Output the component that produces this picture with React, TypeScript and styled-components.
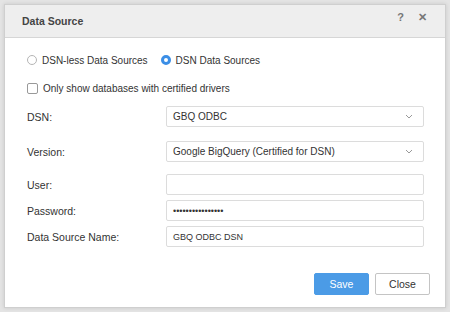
import { FC } from 'react';
import styled, { createGlobalStyle } from 'styled-components';

const GlobalStyle = createGlobalStyle`
	html, body {
		margin: 0;
		padding: 0;
		background: #e4e4e4;
		font-family: 'Liberation Sans', Arial, sans-serif;
	}
	#root {
		padding: 4px;
		width: 450px;
		height: 312px;
		box-sizing: border-box;
	}
`;

const Dialog = styled.div`
	width: 442px;
	height: 304px;
	box-sizing: border-box;
	background: #fff;
	border: 1px solid #cfcfcf;
	box-shadow: 0 0 4px rgba(0, 0, 0, 0.12);
	display: flex;
	flex-direction: column;
`;

const Header = styled.div`
	height: 32px;
	flex-shrink: 0;
	display: flex;
	align-items: center;
	padding: 0 18px 0 17px;
	background: #eeeeee;
	border-bottom: 1px solid #d6d6d6;
`;

const Title = styled.div`
	flex: 1;
	font-size: 10.5px;
	font-weight: bold;
	color: #444;
`;

const HeaderButton = styled.span`
	font-size: 11px;
	font-weight: bold;
	color: #777;
	margin-left: 14px;
	margin-top: -8px;
	cursor: pointer;
`;

const Body = styled.div`
	flex: 1;
	padding: 15px 21px 0 22px;
	display: flex;
	flex-direction: column;
	font-size: 10px;
	color: #333;
`;

const RadioRow = styled.div`
	display: flex;
	align-items: center;
	height: 14px;
`;

const Option = styled.label`
	display: flex;
	align-items: center;
	margin-right: 13px;
	color: #333;
`;

const RadioDot = styled.span<{ $checked?: boolean }>`
	width: 10px;
	height: 10px;
	box-sizing: border-box;
	border-radius: 50%;
	margin-right: 5px;
	border: ${(p) => (p.$checked ? '3px solid #3b8ee6' : '1px solid #b5b5b5')};
	background: #fff;
`;

const CheckRow = styled.label`
	display: flex;
	align-items: center;
	height: 14px;
	margin-top: 14px;
`;

const CheckBox = styled.span`
	width: 9px;
	height: 9px;
	border: 1px solid #999;
	border-radius: 2px;
	margin-right: 5px;
	background: #fff;
`;

const FieldRow = styled.div<{ $gap: number }>`
	display: flex;
	align-items: center;
	margin-top: ${(p) => p.$gap}px;
`;

const Label = styled.div`
	width: 139px;
	flex-shrink: 0;
	font-size: 10.5px;
	color: #333;
`;

const Box = styled.div`
	flex: 1;
	height: 21px;
	box-sizing: border-box;
	border: 1px solid #dcdcdc;
	border-radius: 2px;
	display: flex;
	align-items: center;
	padding: 0 10px 0 6px;
	color: #333;
`;

const BoxText = styled.span<{ $small?: boolean }>`
	flex: 1;
	font-size: ${(p) => (p.$small ? '9px' : '10px')};
`;

const Footer = styled.div`
	display: flex;
	justify-content: flex-end;
	gap: 6px;
	margin-top: 26px;
	margin-right: -6px;
`;

const Button = styled.button<{ $primary?: boolean }>`
	width: 55px;
	height: 22px;
	font-family: inherit;
	font-size: 10.5px;
	border-radius: 2px;
	cursor: pointer;
	border: 1px solid ${(p) => (p.$primary ? '#4b9be6' : '#c4c4c4')};
	background: ${(p) => (p.$primary ? '#4b9be6' : '#fff')};
	color: ${(p) => (p.$primary ? '#fff' : '#333')};
`;

const Chevron: FC = () => (
	<svg width="8" height="5" viewBox="0 0 8 5">
		<path d="M1 1 L4 4 L7 1" fill="none" stroke="#999" strokeWidth="1" />
	</svg>
);

const App: FC = () => (
	<>
		<GlobalStyle />
		<Dialog>
			<Header>
				<Title>Data Source</Title>
				<HeaderButton>?</HeaderButton>
				<HeaderButton>✕</HeaderButton>
			</Header>
			<Body>
				<RadioRow>
					<Option>
						<RadioDot />
						DSN-less Data Sources
					</Option>
					<Option>
						<RadioDot $checked />
						DSN Data Sources
					</Option>
				</RadioRow>
				<CheckRow>
					<CheckBox />
					Only show databases with certified drivers
				</CheckRow>
				<FieldRow $gap={11}>
					<Label>DSN:</Label>
					<Box>
						<BoxText>GBQ ODBC</BoxText>
						<Chevron />
					</Box>
				</FieldRow>
				<FieldRow $gap={14}>
					<Label>Version:</Label>
					<Box>
						<BoxText>Google BigQuery (Certified for DSN)</BoxText>
						<Chevron />
					</Box>
				</FieldRow>
				<FieldRow $gap={12}>
					<Label>User:</Label>
					<Box>
						<BoxText />
					</Box>
				</FieldRow>
				<FieldRow $gap={5}>
					<Label>Password:</Label>
					<Box>
						<BoxText $small>••••••••••••••••</BoxText>
					</Box>
				</FieldRow>
				<FieldRow $gap={5}>
					<Label>Data Source Name:</Label>
					<Box>
						<BoxText $small>GBQ ODBC DSN</BoxText>
					</Box>
				</FieldRow>
				<Footer>
					<Button $primary>Save</Button>
					<Button>Close</Button>
				</Footer>
			</Body>
		</Dialog>
	</>
);

export default App;
